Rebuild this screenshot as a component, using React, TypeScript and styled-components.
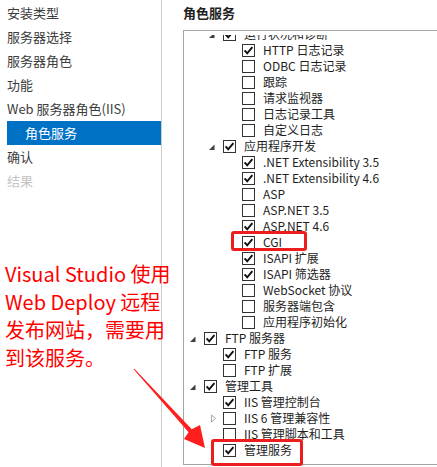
import React from 'react';
import styled, { createGlobalStyle } from 'styled-components';

const GlobalStyle = createGlobalStyle`
  html, body {
    margin: 0;
    padding: 0;
    background: #ffffff;
  }
  body {
    font-family: "Noto Sans CJK SC", "Noto Sans", sans-serif;
  }
`;

const Page = styled.div`
  position: relative;
  width: 437px;
  height: 467px;
  display: flex;
  overflow: hidden;
  background: #ffffff;
`;

const Nav = styled.div`
  width: 162px;
  flex-shrink: 0;
  padding-top: 1px;
  border-right: 1px solid #cccccc;
  box-sizing: border-box;
`;

const NavItem = styled.div<{ $selected?: boolean; $disabled?: boolean }>`
  height: 24px;
  line-height: 24px;
  margin-left: 7px;
  padding-left: ${(p) => (p.$selected ? '18px' : '0')};
  font-size: 13px;
  white-space: nowrap;
  color: ${(p) => (p.$selected ? '#ffffff' : p.$disabled ? '#c4c4c4' : '#3c3c3c')};
  background: ${(p) => (p.$selected ? '#0072c6' : 'transparent')};
`;

const Content = styled.div`
  flex: 1;
  padding-left: 21px;
  min-width: 0;
`;

const Heading = styled.div`
  height: 30px;
  line-height: 26px;
  font-size: 13px;
  font-weight: bold;
  color: #1e1e1e;
  white-space: nowrap;
`;

const TreeBox = styled.div`
  height: 435px;
  box-sizing: border-box;
  margin-right: -20px;
  padding: 4px 0 1px;
  border: 1px solid #a6a6a6;
  background: #ffffff;
  display: flex;
  flex-direction: column;
`;

const Viewport = styled.div`
  flex: 1;
  overflow: hidden;
`;

const TreeList = styled.div`
  margin-top: -9px;
`;

const Row = styled.div<{ $level: number }>`
  height: 16px;
  display: flex;
  align-items: center;
  padding-left: ${(p) => 4 + p.$level * 19}px;
`;

const Toggle = styled.svg`
  width: 16px;
  height: 16px;
  flex-shrink: 0;
`;

const Box = styled.span`
  width: 13px;
  height: 13px;
  box-sizing: border-box;
  border: 1px solid #333333;
  background: #ffffff;
  flex-shrink: 0;
  display: flex;
`;

const Label = styled.span`
  margin-left: 8px;
  font-size: 12px;
  line-height: 16px;
  color: #1e1e1e;
  white-space: nowrap;
`;

const Note = styled.div`
  position: absolute;
  left: 5px;
  top: 260px;
  font-size: 20px;
  line-height: 28px;
  color: #ff0000;
  white-space: nowrap;
`;

const Mark = styled.div<{ $x: number; $y: number; $w: number; $h: number }>`
  position: absolute;
  left: ${(p) => p.$x}px;
  top: ${(p) => p.$y}px;
  width: ${(p) => p.$w}px;
  height: ${(p) => p.$h}px;
  box-sizing: border-box;
  border: 3px solid #ee1d1d;
  border-radius: 3px;
`;

const Overlay = styled.svg`
  position: absolute;
  left: 0;
  top: 0;
  pointer-events: none;
`;

type Item = {
  level: number;
  label: string;
  checked: boolean;
  toggle?: 'open' | 'closed';
};

const items: Item[] = [
  { level: 1, label: '运行状况和诊断', checked: true, toggle: 'open' },
  { level: 2, label: 'HTTP 日志记录', checked: true },
  { level: 2, label: 'ODBC 日志记录', checked: false },
  { level: 2, label: '跟踪', checked: false },
  { level: 2, label: '请求监视器', checked: false },
  { level: 2, label: '日志记录工具', checked: false },
  { level: 2, label: '自定义日志', checked: false },
  { level: 1, label: '应用程序开发', checked: true, toggle: 'open' },
  { level: 2, label: '.NET Extensibility 3.5', checked: true },
  { level: 2, label: '.NET Extensibility 4.6', checked: true },
  { level: 2, label: 'ASP', checked: false },
  { level: 2, label: 'ASP.NET 3.5', checked: false },
  { level: 2, label: 'ASP.NET 4.6', checked: true },
  { level: 2, label: 'CGI', checked: true },
  { level: 2, label: 'ISAPI 扩展', checked: true },
  { level: 2, label: 'ISAPI 筛选器', checked: true },
  { level: 2, label: 'WebSocket 协议', checked: false },
  { level: 2, label: '服务器端包含', checked: false },
  { level: 2, label: '应用程序初始化', checked: false },
  { level: 0, label: 'FTP 服务器', checked: true, toggle: 'open' },
  { level: 1, label: 'FTP 服务', checked: true },
  { level: 1, label: 'FTP 扩展', checked: false },
  { level: 0, label: '管理工具', checked: true, toggle: 'open' },
  { level: 1, label: 'IIS 管理控制台', checked: true },
  { level: 1, label: 'IIS 6 管理兼容性', checked: false, toggle: 'closed' },
  { level: 1, label: 'IIS 管理脚本和工具', checked: false },
  { level: 1, label: '管理服务', checked: true },
];

const navItems = [
  { label: '安装类型' },
  { label: '服务器选择' },
  { label: '服务器角色' },
  { label: '功能' },
  { label: 'Web 服务器角色(IIS)' },
  { label: '角色服务', selected: true },
  { label: '确认' },
  { label: '结果', disabled: true },
];

const Arrow: React.FC<{ kind?: 'open' | 'closed' }> = ({ kind }) => (
  <Toggle viewBox="0 0 16 16">
    {kind === 'open' && <polygon points="2,12 7.5,12 7.5,6.5" fill="#404040" />}
    {kind === 'closed' && (
      <polygon points="4.5,5 8.5,8.5 4.5,12" fill="#ffffff" stroke="#a6a6a6" strokeWidth="1" />
    )}
  </Toggle>
);

const CheckBox: React.FC<{ checked: boolean }> = ({ checked }) => (
  <Box>
    {checked && (
      <svg width="11" height="11" viewBox="0 0 11 11">
        <path d="M1.6 5.4 L4.2 8.3 L9.4 2.2" fill="none" stroke="#111111" strokeWidth="2" />
      </svg>
    )}
  </Box>
);

export default function App() {
  return (
    <>
      <GlobalStyle />
      <Page>
        <Nav>
          {navItems.map((n) => (
            <NavItem key={n.label} $selected={n.selected} $disabled={n.disabled}>
              {n.label}
            </NavItem>
          ))}
        </Nav>
        <Content>
          <Heading>角色服务</Heading>
          <TreeBox>
            <Viewport>
              <TreeList>
                {items.map((it) => (
                  <Row key={it.label} $level={it.level}>
                    <Arrow kind={it.toggle} />
                    <CheckBox checked={it.checked} />
                    <Label>{it.label}</Label>
                  </Row>
                ))}
              </TreeList>
            </Viewport>
          </TreeBox>
        </Content>

        <Note>
          Visual Studio 使用
          <br />
          Web Deploy 远程
          <br />
          发布网站，需要用
          <br />
          到该服务。
        </Note>
        <Mark $x={231} $y={231} $w={76} $h={20} />
        <Mark $x={211} $y={439} $w={92} $h={27} />
        <Overlay width="437" height="467" viewBox="0 0 437 467">
          <polygon
            points="133.6,369.3 188.6,432.2 184,439 205,448 200,425 191.8,429.2 134.4,368.7"
            fill="#ff1e1e"
          />
        </Overlay>
      </Page>
    </>
  );
}
